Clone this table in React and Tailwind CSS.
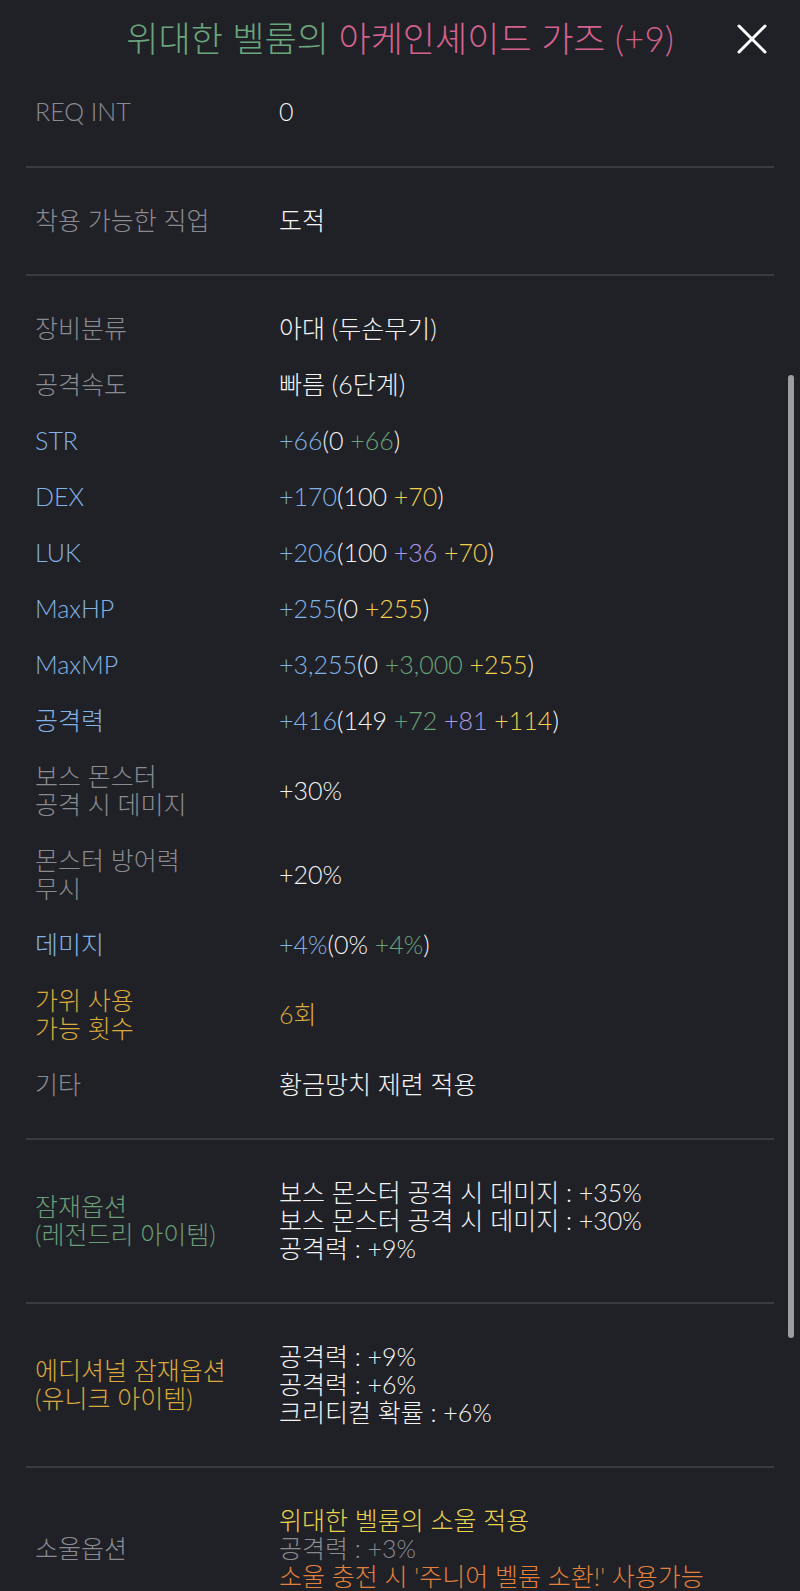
const GRAY = 'text-[#8a8b91]';
const WHITE = 'text-[#f4f4f4]';
const BLUE = 'text-[#82b3e6]';
const GREEN = 'text-[#68a47a]';
const YELLOW = 'text-[#f3d04c]';
const PURPLE = 'text-[#a99be8]';
const GOLD = 'text-[#dba93c]';

// each value is a list of [text, colour] pieces
const stats = [
  { label: '장비분류', lc: GRAY, value: [['아대 (두손무기)', WHITE]] },
  { label: '공격속도', lc: GRAY, value: [['빠름 (6단계)', WHITE]] },
  { label: 'STR', lc: BLUE, value: [['+66', BLUE], ['(0 ', WHITE], ['+66', GREEN], [')', WHITE]] },
  { label: 'DEX', lc: BLUE, value: [['+170', BLUE], ['(100 ', WHITE], ['+70', YELLOW], [')', WHITE]] },
  { label: 'LUK', lc: BLUE, value: [['+206', BLUE], ['(100 ', WHITE], ['+36 ', PURPLE], ['+70', YELLOW], [')', WHITE]] },
  { label: 'MaxHP', lc: BLUE, value: [['+255', BLUE], ['(0 ', WHITE], ['+255', YELLOW], [')', WHITE]] },
  { label: 'MaxMP', lc: BLUE, value: [['+3,255', BLUE], ['(0 ', WHITE], ['+3,000 ', GREEN], ['+255', YELLOW], [')', WHITE]] },
  { label: '공격력', lc: BLUE, value: [['+416', BLUE], ['(149 ', WHITE], ['+72 ', GREEN], ['+81 ', PURPLE], ['+114', YELLOW], [')', WHITE]] },
  { label: ['보스 몬스터', '공격 시 데미지'], lc: GRAY, value: [['+30%', WHITE]] },
  { label: ['몬스터 방어력', '무시'], lc: GRAY, value: [['+20%', WHITE]] },
  { label: '데미지', lc: BLUE, value: [['+4%', BLUE], ['(0% ', WHITE], ['+4%', GREEN], [')', WHITE]] },
  { label: ['가위 사용', '가능 횟수'], lc: GOLD, value: [['6회', GOLD]] },
  { label: '기타', lc: GRAY, value: [['황금망치 제련 적용', WHITE]] },
];

function Label({ text, color }) {
  const lines = Array.isArray(text) ? text : [text];
  return (
    <div className={`w-[244px] shrink-0 ${color}`}>
      {lines.map(l => <div key={l}>{l}</div>)}
    </div>
  );
}

function Row({ label, lc, children }) {
  return (
    <div className="flex items-center pl-[9px]">
      <Label text={label} color={lc} />
      <div className="whitespace-nowrap">{children}</div>
    </div>
  );
}

function Section({ children, first }) {
  return (
    <div className={first ? 'pt-[21px] pb-[41px]' : 'pt-[38px] pb-[40px] border-t-2 border-[#3a3b42]'}>
      {children}
    </div>
  );
}

export default function App() {
  return (
    <div
      className="relative h-[1591px] w-[800px] overflow-hidden bg-[#202127] text-[25px] leading-7"
      style={{ fontFamily: 'Lato, "Noto Sans CJK KR", sans-serif' }}
    >
      <div className="relative flex h-[76px] items-center justify-center text-[35px] font-light">
        <span className="text-[#6aa57c]">위대한 벨룸의&nbsp;</span>
        <span className="text-[#d4618f]">아케인셰이드 가즈 (+9)</span>
        <button className="absolute right-[33px] top-[24px] text-white">
          <svg width="30" height="30" viewBox="0 0 30 30" stroke="currentColor" strokeWidth="3" strokeLinecap="round">
            <line x1="2" y1="2" x2="28" y2="28" />
            <line x1="28" y1="2" x2="2" y2="28" />
          </svg>
        </button>
      </div>

      <div className="mx-[26px] font-light">
        <Section first>
          <Row label="REQ INT" lc={GRAY}><span className={WHITE}>0</span></Row>
        </Section>

        <Section>
          <Row label="착용 가능한 직업" lc={GRAY}><span className={WHITE}>도적</span></Row>
        </Section>

        <Section>
          <div className="flex flex-col gap-7">
            {stats.map((s, i) => (
              <Row key={i} label={s.label} lc={s.lc}>
                {s.value.map(([t, c], j) => (
                  <span key={j} className={`${c} whitespace-pre`}>{t}</span>
                ))}
              </Row>
            ))}
          </div>
        </Section>

        <Section>
          <Row label={['잠재옵션', '(레전드리 아이템)']} lc="text-[#6a9d78]">
            <div className={WHITE}>보스 몬스터 공격 시 데미지 : +35%</div>
            <div className={WHITE}>보스 몬스터 공격 시 데미지 : +30%</div>
            <div className={WHITE}>공격력 : +9%</div>
          </Row>
        </Section>

        <Section>
          <Row label={['에디셔널 잠재옵션', '(유니크 아이템)']} lc={GOLD}>
            <div className={WHITE}>공격력 : +9%</div>
            <div className={WHITE}>공격력 : +6%</div>
            <div className={WHITE}>크리티컬 확률 : +6%</div>
          </Row>
        </Section>

        <Section>
          <Row label="소울옵션" lc={GRAY}>
            <div className="text-[#e9d24e]">위대한 벨룸의 소울 적용</div>
            <div className={GRAY}>공격력 : +3%</div>
            <div className="text-[#e2803c]">소울 충전 시 '주니어 벨룸 소환!' 사용가능</div>
          </Row>
        </Section>
      </div>

      {/* scrollbar thumb */}
      <div className="absolute right-[6px] top-[375px] h-[963px] w-[6px] rounded-full bg-[#9e9ea0]" />
    </div>
  );
}
